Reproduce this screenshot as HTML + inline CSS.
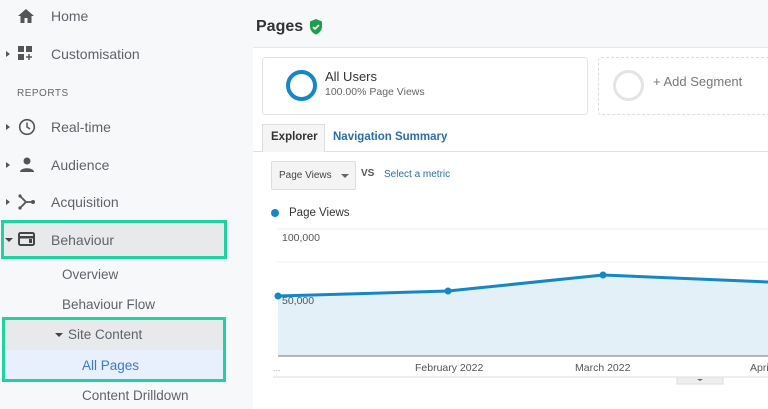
<!DOCTYPE html>
<html><head><meta charset="utf-8"><style>
*{margin:0;padding:0;box-sizing:border-box}
body{width:768px;height:409px;overflow:hidden;background:#f7f8fa;font-family:"Liberation Sans",sans-serif;position:relative;color:#3c4043}
.a{position:absolute}
.nav{font-size:14px;color:#5f6368;}
.caret{width:0;height:0;border-top:3px solid transparent;border-bottom:3px solid transparent;border-left:4px solid #555}
.caretd{width:0;height:0;border-left:4px solid transparent;border-right:4px solid transparent;border-top:4px solid #444}
</style></head><body>
<svg class="a" style="left:17px;top:8px" width="18" height="16" viewBox="0 0 18 16"><path d="M9 1L1 8h2.5v7h4v-5h3v5h4V8H17z" fill="#555"/></svg>
<div class="a nav" style="left:51px;top:8px">Home</div>
<div class="a caret" style="left:6px;top:51px"></div>
<svg class="a" style="left:18px;top:46px" width="16" height="16"><rect x="0" y="0" width="6" height="6" fill="#555"/><rect x="8" y="0" width="6" height="6" fill="#555"/><rect x="0" y="8" width="6" height="6" fill="#555"/><path d="M11 8v6M8 11h6" stroke="#555" stroke-width="1.5"/></svg>
<div class="a nav" style="left:51px;top:46px">Customisation</div>
<div class="a" style="left:17px;top:88px;font-size:10px;letter-spacing:.5px;color:#666">REPORTS</div>
<div class="a caret" style="left:6px;top:124px"></div>
<svg class="a" style="left:18px;top:118px" width="18" height="18"><circle cx="9" cy="9" r="7.3" fill="none" stroke="#555" stroke-width="1.6"/><path d="M9 4.5V9l3 2" fill="none" stroke="#555" stroke-width="1.5"/></svg>
<div class="a nav" style="left:51px;top:119px">Real-time</div>
<div class="a caret" style="left:6px;top:162px"></div>
<svg class="a" style="left:19px;top:157px" width="16" height="16"><circle cx="8" cy="4" r="3.5" fill="#555"/><path d="M1 15c0-5 14-5 14 0z" fill="#555"/></svg>
<div class="a nav" style="left:51px;top:157px">Audience</div>
<div class="a caret" style="left:6px;top:199px"></div>
<svg class="a" style="left:18px;top:194px" width="18" height="16"><path d="M2 2l6 6-6 6M8 8h6" fill="none" stroke="#555" stroke-width="1.8"/><circle cx="15" cy="8" r="2" fill="#555"/><circle cx="2" cy="2" r="1.6" fill="#555"/><circle cx="2" cy="14" r="1.6" fill="#555"/></svg>
<div class="a nav" style="left:51px;top:194px">Acquisition</div>
<div class="a" style="left:1px;top:220px;width:226px;height:39px;background:#e8e9eb;border:3px solid #1ed3a0"></div>
<div class="a caretd" style="left:5px;top:238px"></div>
<svg class="a" style="left:18px;top:232px" width="17" height="14"><rect x="1" y="1" width="15" height="12" rx="1.5" fill="none" stroke="#444" stroke-width="2"/><rect x="1" y="4" width="15" height="2.5" fill="#444"/><rect x="11" y="7" width="3" height="4" fill="#444"/></svg>
<div class="a nav" style="left:51px;top:232px">Behaviour</div>
<div class="a" style="left:62px;top:267px;font-size:13.5px;color:#5f6368">Overview</div>
<div class="a" style="left:62px;top:297px;font-size:13.5px;color:#5f6368">Behaviour Flow</div>
<div class="a" style="left:2px;top:317px;width:224px;height:65px;border:3px solid #1ed3a0;background:#e8f0fd"></div>
<div class="a" style="left:5px;top:320px;width:218px;height:30px;background:#e8e9eb"></div>
<div class="a caretd" style="left:55px;top:333px"></div>
<div class="a" style="left:68px;top:327px;font-size:13.5px;color:#5f6368">Site Content</div>
<div class="a" style="left:82px;top:358px;font-size:13.5px;color:#3b78d8">All Pages</div>
<div class="a" style="left:82px;top:388px;font-size:13.5px;color:#5f6368">Content Drilldown</div>
<div class="a" style="left:253px;top:47px;width:515px;height:362px;background:#fff;border-top:1px solid #e6e7e9"></div>
<div class="a" style="left:256px;top:18px;font-size:16px;font-weight:bold;color:#333">Pages</div>
<svg class="a" style="left:309px;top:19px" width="14" height="16"><path d="M7 0L1 2.5v5c0 4 3 7 6 8 3-1 6-4 6-8v-5z" fill="#1e9e4e"/><path d="M4 8l2 2 4-4" fill="none" stroke="#fff" stroke-width="1.6"/></svg>
<div class="a" style="left:262px;top:57px;width:326px;height:58px;border:1px solid #e3e3e3;border-radius:3px;background:#fff"></div>
<div class="a" style="left:286px;top:70px;width:31px;height:31px;border:4px solid #1586c8;border-radius:50%"></div>
<div class="a" style="left:325px;top:69px;font-size:13px;color:#333">All Users</div>
<div class="a" style="left:325px;top:86px;font-size:10.5px;color:#666">100.00% Page Views</div>
<div class="a" style="left:598px;top:57px;width:180px;height:58px;border:1px dashed #ddd;border-radius:3px"></div>
<div class="a" style="left:613px;top:70px;width:31px;height:31px;border:3px solid #e4e4e4;border-radius:50%"></div>
<div class="a" style="left:653px;top:74px;font-size:13px;color:#777">+ Add Segment</div>
<div class="a" style="left:253px;top:151px;width:515px;height:1px;background:#e0e0e0"></div>
<div class="a" style="left:262px;top:124px;width:63px;height:28px;background:#f5f5f5;border:1px solid #ddd;border-bottom:none"></div>
<div class="a" style="left:271px;top:131px;font-size:11.5px;font-weight:bold;color:#333">Explorer</div>
<div class="a" style="left:333px;top:131px;font-size:11.5px;font-weight:bold;color:#2a6ea8">Navigation Summary</div>
<div class="a" style="left:271px;top:161px;width:85px;height:29px;background:#f4f4f4;border:1px solid #ddd;border-radius:2px"></div>
<div class="a" style="left:279px;top:170px;font-size:10px;color:#444">Page Views</div>
<div class="a caretd" style="left:341px;top:174px;border-top-color:#666"></div>
<div class="a" style="left:361px;top:168px;font-size:10px;font-weight:bold;color:#555">VS</div>
<div class="a" style="left:384px;top:169px;font-size:10px;color:#2a6ea8">Select a metric</div>
<div class="a" style="left:271px;top:209px;width:8px;height:8px;border-radius:50%;background:#1586c8"></div>
<div class="a" style="left:289px;top:207px;font-size:11.5px;color:#333">Page Views</div>
<svg class="a" style="left:253px;top:220px" width="515" height="170">
<line x1="24" y1="9" x2="515" y2="9" stroke="#eee"/>
<line x1="24" y1="42" x2="515" y2="42" stroke="#f3f3f3"/>
<line x1="24" y1="94" x2="515" y2="94" stroke="#f3f3f3"/>
<path d="M25 76L195 71L350 55L515 62V136H25Z" fill="#e3f0f8"/>
<line x1="25" y1="136" x2="515" y2="136" stroke="#777" stroke-width="1"/>
<path d="M25 76L195 71L350 55L515 62" fill="none" stroke="#1586c8" stroke-width="3"/>
<circle cx="25" cy="76" r="3.5" fill="#1586c8"/><circle cx="195" cy="71" r="3.5" fill="#1586c8"/><circle cx="350" cy="55" r="3.5" fill="#1586c8"/>
<text x="29" y="21" font-size="10.5" fill="#555" font-family="Liberation Sans">100,000</text>
<text x="29" y="84" font-size="10.5" fill="#555" font-family="Liberation Sans">50,000</text>
<text x="20" y="151" font-size="9" fill="#aaa" font-family="Liberation Sans">...</text>
<text x="162" y="151" font-size="10.5" fill="#555" font-family="Liberation Sans">February 2022</text>
<text x="322" y="151" font-size="10.5" fill="#555" font-family="Liberation Sans">March 2022</text>
<text x="497" y="151" font-size="10.5" fill="#555" font-family="Liberation Sans">April</text>
<line x1="20" y1="157" x2="515" y2="157" stroke="#ddd"/>
<rect x="424" y="157" width="46" height="7" fill="#eee" stroke="#ddd"/>
<path d="M444 159h6l-3 2z" fill="#666"/>
</svg>
</body></html>
